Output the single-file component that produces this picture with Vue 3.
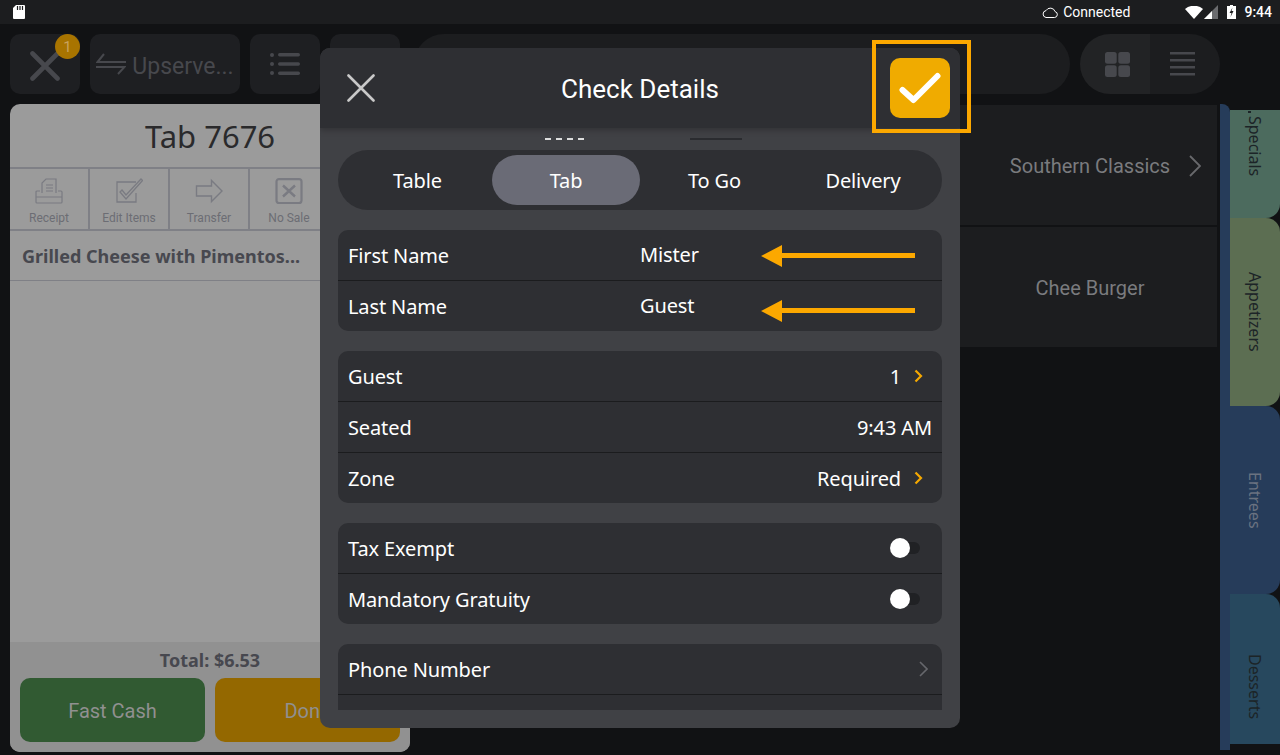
<template>
  <div class="screen">
    <div class="statusbar">
      <svg class="sd" width="12" height="14" viewBox="0 0 12 14"><path d="M3 0h8a1 1 0 0 1 1 1v12a1 1 0 0 1-1 1H1a1 1 0 0 1-1-1V3z" fill="#fff"/><path d="M4.500 1v4M7 1v4M9.500 1v4" stroke="#1c1d1f" stroke-width="1.200"/></svg>
      <div class="status-right">
        <svg width="16" height="11" viewBox="0 0 16 11" fill="none"><path d="M4 10.500h8.500a3 3 0 0 0 .6-5.900A5 5 0 0 0 4 3.600a3.500 3.500 0 0 0 0 6.900z" stroke="#fff" stroke-width="1"/></svg>
        <span class="connected">Connected</span>
        <svg class="wifi" width="18" height="13" viewBox="0 0 18 13"><path d="M0 3a14 14 0 0 1 18 0L9 13z" fill="#fff"/></svg>
        <svg class="signal" width="14" height="14" viewBox="0 0 14 14"><path d="M14 0v14H0z" fill="#6b6c6f"/><path d="M8 6v8H0z" fill="#fff"/></svg>
        <svg class="batt" width="9" height="14" viewBox="0 0 9 14"><path d="M3 0h3v1h3v13H0V1h3z" fill="#fff"/><path d="M5.500 2.500 2.500 8h2l-1 4 3-6h-2z" fill="#1c1d1f"/></svg>
        <span class="clock">9:44</span>
      </div>
    </div>

    <div class="topbar">
      <div class="btn btn-close">
        <svg width="30" height="30" viewBox="0 0 30 30"><path d="M2.500 2.500l25 25M27.500 2.500l-25 25" stroke="#47484d" stroke-width="4.600" stroke-linecap="round"/></svg>
        <span class="badge">1</span>
      </div>
      <div class="btn btn-server">
        <svg width="30" height="22" viewBox="0 0 30 22" fill="none" stroke="#47484d" stroke-width="2"><path d="M8 1 1.500 9H30M22 21l6.500-7H0"/></svg>
        <span>Upserve...</span>
      </div>
      <div class="btn btn-icon">
        <svg width="30" height="22" viewBox="0 0 30 22"><g fill="#47484d"><circle cx="2" cy="2" r="2"/><circle cx="2" cy="11" r="2"/><circle cx="2" cy="20" r="2"/><rect x="8" y="0" width="22" height="3.400" rx="1.700"/><rect x="8" y="9.300" width="22" height="3.400" rx="1.700"/><rect x="8" y="18.600" width="22" height="3.400" rx="1.700"/></g></svg>
      </div>
      <div class="btn btn-icon"></div>
      <div class="search"></div>
      <div class="view-toggle">
        <div class="view-half on">
          <svg width="25" height="25" viewBox="0 0 25 25"><g fill="#47484d"><rect width="11.700" height="11.700" rx="2.500"/><rect x="13.300" width="11.700" height="11.700" rx="2.500"/><rect y="13.300" width="11.700" height="11.700" rx="2.500"/><rect x="13.300" y="13.300" width="11.700" height="11.700" rx="2.500"/></g></svg>
        </div>
        <div class="view-half list">
          <svg width="25" height="24" viewBox="0 0 25 24"><g fill="#47484d"><rect y="0" width="25" height="2.500"/><rect y="7" width="25" height="2.500"/><rect y="14" width="25" height="2.500"/><rect y="21" width="25" height="2.500"/></g></svg>
        </div>
      </div>
    </div>

    <div class="main">
      <div class="check">
        <div class="check-title">Tab 7676</div>
        <div class="actions">
          <div class="action">
            <svg width="28" height="26" viewBox="0 0 28 26" fill="none" stroke="#7a7b82" stroke-width="1.200"><path d="M7 15V5l4-4h10v14"/><path d="M5 13H2a1 1 0 0 0-1 1v10a1 1 0 0 0 1 1h24a1 1 0 0 0 1-1V14a1 1 0 0 0-1-1h-3M1 19h26M11 7h7M11 10h7M11 13h7"/></svg>
            <span>Receipt</span>
          </div>
          <div class="action">
            <svg width="28" height="26" viewBox="0 0 28 26" fill="none" stroke="#7a7b82" stroke-width="1.300"><path d="M21 4H2v20h19v-9"/><path d="M7 12l4 5L26 1l1.500 1.500L11 21l-6-7z"/></svg>
            <span>Edit Items</span>
          </div>
          <div class="action">
            <svg width="28" height="26" viewBox="0 0 28 26" fill="none" stroke="#7a7b82" stroke-width="1.400"><path d="M1.500 8h15V2.500L27 13 16.500 23.500V18h-15z"/></svg>
            <span>Transfer</span>
          </div>
          <div class="action">
            <svg width="28" height="26" viewBox="0 0 28 26" fill="none" stroke="#7a7b82" stroke-width="2.200"><rect x="1.500" y="1.100" width="25" height="24" rx="2.500"/><path d="M8 7.500l12 11M20 7.500l-12 11" stroke-width="2.400"/></svg>
            <span>No Sale</span>
          </div>
        </div>
        <div class="item">Grilled Cheese with Pimentos...</div>
        <div class="check-space"></div>
        <div class="check-foot">
          <div class="total">Total: $6.53</div>
          <div class="pay-row">
            <div class="pay fast">Fast Cash</div>
            <div class="pay done">Done</div>
          </div>
        </div>
      </div>

      <div class="menu-items">
        <div class="menu-item"></div>
        <div class="menu-item">
          <span>Southern Classics</span>
          <svg class="menu-chev" width="12" height="22" viewBox="0 0 12 22" fill="none"><path d="M1 1l10 10L1 21" stroke="#68696c" stroke-width="1.800"/></svg>
        </div>
        <div class="menu-item"></div>
        <div class="menu-item"><span>Chee Burger</span></div>
      </div>

      <div class="tabs">
        <div class="tab-strip"></div>
        <div v-for="t in tabs" :key="t.name" class="tab" :class="t.cls"><span>{{ t.name }}</span></div>
      </div>
    </div>

    <div class="modal">
      <div class="modal-head">
        <svg width="28" height="28" viewBox="0 0 28 28"><path d="M1.500 1.500l25 25M26.500 1.500l-25 25" stroke="#c9c9c9" stroke-width="2.600" stroke-linecap="round"/></svg>
        <div class="modal-title">Check Details</div>
        <div class="confirm">
          <svg width="42" height="32" viewBox="0 0 42 32" fill="none"><path d="M3.500 18l11 10L38.500 4" stroke="#fff" stroke-width="6" stroke-linecap="round" stroke-linejoin="round"/></svg>
        </div>
      </div>
      <div class="modal-body">
        <div class="peek"><i></i><i></i><i></i><i></i><b></b></div>
        <div class="segments">
          <div v-for="s in segments" :key="s" class="segment" :class="{ active: s === 'Tab' }">{{ s }}</div>
        </div>

        <div class="group">
          <div class="row"><span class="name-label">First Name</span><span class="name-value up">Mister</span></div>
          <div class="row"><span class="name-label">Last Name</span><span class="name-value up">Guest</span></div>
        </div>

        <div class="group">
          <div class="row"><span>Guest</span><span class="right">1<svg class="chev" width="9" height="14" viewBox="0 0 9 14" fill="none"><path d="M1.500 1.500 7 7l-5.500 5.500" stroke="#f5a800" stroke-width="2.200"/></svg></span></div>
          <div class="row"><span>Seated</span><span>9:43 AM</span></div>
          <div class="row"><span>Zone</span><span class="right">Required<svg class="chev" width="9" height="14" viewBox="0 0 9 14" fill="none"><path d="M1.500 1.500 7 7l-5.500 5.500" stroke="#f5a800" stroke-width="2.200"/></svg></span></div>
        </div>

        <div class="group">
          <div class="row"><span>Tax Exempt</span><span class="switch"><i></i></span></div>
          <div class="row"><span>Mandatory Gratuity</span><span class="switch"><i></i></span></div>
        </div>

        <div class="group last">
          <div class="row"><span>Phone Number</span><svg class="chev-plain" width="9" height="16" viewBox="0 0 9 16" fill="none"><path d="M1 1l7 7-7 7" stroke="#66676c" stroke-width="1.600"/></svg></div>
          <div class="row"></div>
        </div>
      </div>
    </div>

    <!-- orange markup on top of the screenshot -->
    <div class="mark-box"></div>
    <svg class="mark-arrow first" width="154" height="22" viewBox="0 0 154 22"><path d="M0 11 21 0v8h133v5H21v9z" fill="#fca800"/></svg>
    <svg class="mark-arrow second" width="154" height="22" viewBox="0 0 154 22"><path d="M0 11 21 0v8h133v5H21v9z" fill="#fca800"/></svg>
  </div>
</template>

<script setup>
const segments = ['Table', 'Tab', 'To Go', 'Delivery']
const tabs = [
  { name: 'Specials', cls: 'specials' },
  { name: 'Appetizers', cls: 'appetizers' },
  { name: 'Entrees', cls: 'entrees' },
  { name: 'Desserts', cls: 'desserts' }
]
</script>

<style scoped>
.screen {
  position: relative;
  width: 1280px;
  height: 755px;
  overflow: hidden;
  background: #111214;
  font-family: "Noto Sans", sans-serif;
  display: flex;
  flex-direction: column;
}
.statusbar {
  height: 24px;
  flex: none;
  background: #1c1d1f;
  display: flex;
  align-items: center;
  justify-content: space-between;
  padding: 0 8px 0 13px;
  color: #fff;
  font-family: Roboto, sans-serif;
  font-size: 14px;
}
.status-right {
  display: flex;
  align-items: center;
}
.connected {
  margin-left: 5px;
}
.wifi {
  margin-left: 55px;
}
.signal {
  margin-left: 1px;
}
.batt {
  margin-left: 9px;
}
.clock {
  margin-left: 8px;
  font-weight: 500;
}

.topbar {
  height: 60px;
  flex: none;
  margin-top: 10px;
  padding: 0 10px;
  display: flex;
  gap: 10px;
}
.btn {
  position: relative;
  background: #1e1f22;
  border-radius: 10px;
  display: flex;
  align-items: center;
  justify-content: center;
}
.btn-close {
  width: 70px;
}
.btn-close svg {
  margin-top: 4px;
}
.badge {
  position: absolute;
  top: 0;
  right: 0;
  width: 25px;
  height: 25px;
  border-radius: 50%;
  background: #a87400;
  color: #c9a25c;
  font-family: Roboto, sans-serif;
  font-size: 15px;
  display: flex;
  align-items: center;
  justify-content: center;
}
.btn-server {
  width: 150px;
  gap: 6px;
  color: #47484d;
  font-family: Roboto, sans-serif;
  font-size: 23px;
  white-space: nowrap;
}
.btn-server span {
  padding-top: 5px;
}
.btn-icon {
  width: 70px;
}
.search {
  width: 656px;
  margin-left: 4px;
  background: #1c1d1f;
  border-radius: 30px;
}
.view-toggle {
  width: 140px;
  display: flex;
  border-radius: 30px;
  overflow: hidden;
}
.view-half {
  width: 70px;
  flex: none;
  box-sizing: border-box;
  background: #1c1d1f;
  display: flex;
  align-items: center;
  justify-content: center;
}
.view-half.on {
  background: #222325;
  padding-left: 5px;
}
.view-half.list {
  padding-right: 6px;
}

.main {
  flex: 1;
  margin-top: 10px;
  display: flex;
  min-height: 0;
}
.check {
  width: 400px;
  height: 648px;
  margin-left: 10px;
  background: #9b9b9b;
  border-radius: 10px;
  display: flex;
  flex-direction: column;
  overflow: hidden;
}
.check-title {
  height: 63px;
  flex: none;
  text-align: center;
  font-size: 31px;
  line-height: 65px;
  color: #2a2a2c;
}
.actions {
  height: 64px;
  flex: none;
  display: flex;
  border-top: 2px solid #7f8086;
  border-bottom: 2px solid #7f8086;
  box-sizing: border-box;
}
.action {
  width: 80px;
  flex: none;
  box-sizing: border-box;
  border-right: 2px solid #7f8086;
  display: flex;
  flex-direction: column;
  align-items: center;
  padding-top: 9px;
  color: #6c6d74;
  font-family: Roboto, sans-serif;
  font-size: 12px;
  gap: 7px;
}
.item {
  height: 50px;
  flex: none;
  box-sizing: border-box;
  padding-left: 12px;
  border-bottom: 1px solid #7f8086;
  font-weight: 700;
  font-size: 18px;
  line-height: 50px;
  color: #47484f;
  white-space: nowrap;
}
.check-space {
  flex: 1;
}
.check-foot {
  height: 110px;
  flex: none;
  background: #919191;
  display: flex;
  flex-direction: column;
}
.total {
  height: 36px;
  flex: none;
  text-align: center;
  font-weight: 700;
  font-size: 18px;
  line-height: 37px;
  color: #47484f;
}
.pay-row {
  display: flex;
  gap: 10px;
  padding: 0 10px;
}
.pay {
  flex: 1;
  height: 64px;
  box-sizing: border-box;
  padding-top: 2px;
  border-radius: 10px;
  color: #909090;
  font-family: Roboto, sans-serif;
  font-size: 20px;
  display: flex;
  align-items: center;
  justify-content: center;
}
.fast {
  background: #315a32;
}
.done {
  background: #946800;
}

.menu-items {
  flex: 1;
  margin-left: 10px;
  margin-top: 1px;
  display: grid;
  grid-template-columns: 1fr 254px;
  grid-auto-rows: 120px;
  row-gap: 2px;
  align-content: start;
}
.menu-item {
  position: relative;
  box-sizing: border-box;
  padding-top: 2px;
  background: #1c1d1f;
  color: #7a7b7e;
  font-family: Roboto, sans-serif;
  font-size: 20px;
  display: flex;
  align-items: center;
  justify-content: center;
}
.menu-chev {
  position: absolute;
  right: 16px;
  top: 50px;
}
.tabs {
  position: relative;
  width: 60px;
  height: 646px;
  flex: none;
  margin-left: 3px;
  padding-top: 6px;
  box-sizing: border-box;
  display: flex;
  flex-direction: column;
}
.tab-strip {
  position: absolute;
  left: 0;
  top: 0;
  width: 10px;
  height: 100%;
  background: #263c5a;
  border-top-right-radius: 8px;
}
.tab {
  position: relative;
  width: 50px;
  margin-left: 10px;
  height: 188px;
  flex: none;
  box-sizing: border-box;
  overflow: hidden;
  display: flex;
  justify-content: center;
  align-items: center;
  border-radius: 0 14px 14px 0;
  writing-mode: vertical-rl;
  font-size: 16px;
  white-space: nowrap;
  color: #1c2427;
}
.specials {
  height: 108px;
  background: #4c6b5e;
  justify-content: flex-end;
  padding-bottom: 42px;
  border-top-right-radius: 0;
}
/* tail of the label above, scrolled out of the tab */
.specials::before {
  content: "";
  position: absolute;
  left: 18px;
  top: 1px;
  width: 3px;
  height: 2px;
  background: #1c2427;
}
.appetizers {
  background: #5c6e52;
}
.entrees {
  width: 60px;
  margin-left: 0;
  padding-left: 10px;
  background: #263c5a;
  color: #6a7280;
}
.desserts {
  height: 150px;
  background: #27485e;
  justify-content: flex-start;
  padding-top: 60px;
  border-bottom-right-radius: 0;
}

.modal {
  position: absolute;
  z-index: 1;
  left: 320px;
  top: 48px;
  width: 640px;
  height: 680px;
  background: #404145;
  border-radius: 10px;
  display: flex;
  flex-direction: column;
  overflow: hidden;
}
.modal-head {
  height: 80px;
  flex: none;
  background: #2e2f33;
  box-shadow: 0 2px 6px rgba(0, 0, 0, 0.25);
  padding: 0 10px 0 27px;
  display: flex;
  align-items: center;
  position: relative;
  z-index: 1;
}
.modal-title {
  flex: 1;
  text-align: center;
  color: #fff;
  font-family: Roboto, sans-serif;
  font-size: 26px;
  margin-left: 15px;
  padding-top: 1px;
}
.confirm {
  width: 60px;
  height: 60px;
  background: #f0ab00;
  border-radius: 10px;
  display: flex;
  align-items: center;
  justify-content: center;
}
.modal-body {
  flex: 1;
  min-height: 0;
  padding: 0 18px;
  color: #fff;
  font-size: 20px;
  letter-spacing: -0.12px;
  overflow: hidden;
}
.peek {
  height: 2px;
  margin-top: 10px;
  margin-bottom: 10px;
  padding-left: 207px;
  display: flex;
  gap: 5px;
}
.peek i {
  width: 6px;
  height: 2px;
  background: #ddd;
}
.peek b {
  width: 52px;
  height: 2px;
  margin-left: 101px;
  background: #2a2b2f;
}
.segments {
  height: 60px;
  background: #2e2f33;
  border-radius: 30px;
  padding: 5px 5px;
  box-sizing: border-box;
  display: grid;
  grid-template-columns: 149px 148px 149px 148px;
}
.segment {
  display: flex;
  align-items: center;
  justify-content: center;
  border-radius: 25px;
}
.segment.active {
  background: #6a6b76;
}
.group {
  margin-top: 20px;
  background: #2e2f33;
  border-radius: 10px;
  overflow: hidden;
}
.group.last {
  border-radius: 10px 10px 0 0;
  height: 66px;
}
.row {
  height: 50px;
  padding: 0 10px;
  display: flex;
  align-items: center;
  justify-content: space-between;
  border-top: 1px solid #1b1c1e;
}
.row:first-child {
  border-top: none;
}
.name-label {
  width: 292px;
}
.name-value {
  flex: 1;
}
.up {
  margin-top: -2px;
}
.right {
  display: flex;
  align-items: center;
}
.chev {
  margin: 0 9px 0 13px;
}
.chev-plain {
  margin-right: 4px;
}
.switch {
  position: relative;
  width: 30px;
  height: 12px;
  margin-right: 12px;
  border-radius: 6px;
  background: #202124;
}
.switch i {
  position: absolute;
  left: 0;
  top: -4px;
  width: 20px;
  height: 20px;
  border-radius: 50%;
  background: #fff;
}

.mark-box {
  position: absolute;
  z-index: 2;
  left: 872px;
  top: 40px;
  width: 99px;
  height: 93px;
  box-sizing: border-box;
  border: 4px solid #fca800;
}
.mark-arrow {
  position: absolute;
  z-index: 2;
  left: 761px;
}
.mark-arrow.first {
  top: 245px;
}
.mark-arrow.second {
  top: 300px;
}
</style>

<style>
html, body {
  margin: 0;
  background: #111214;
}
</style>
